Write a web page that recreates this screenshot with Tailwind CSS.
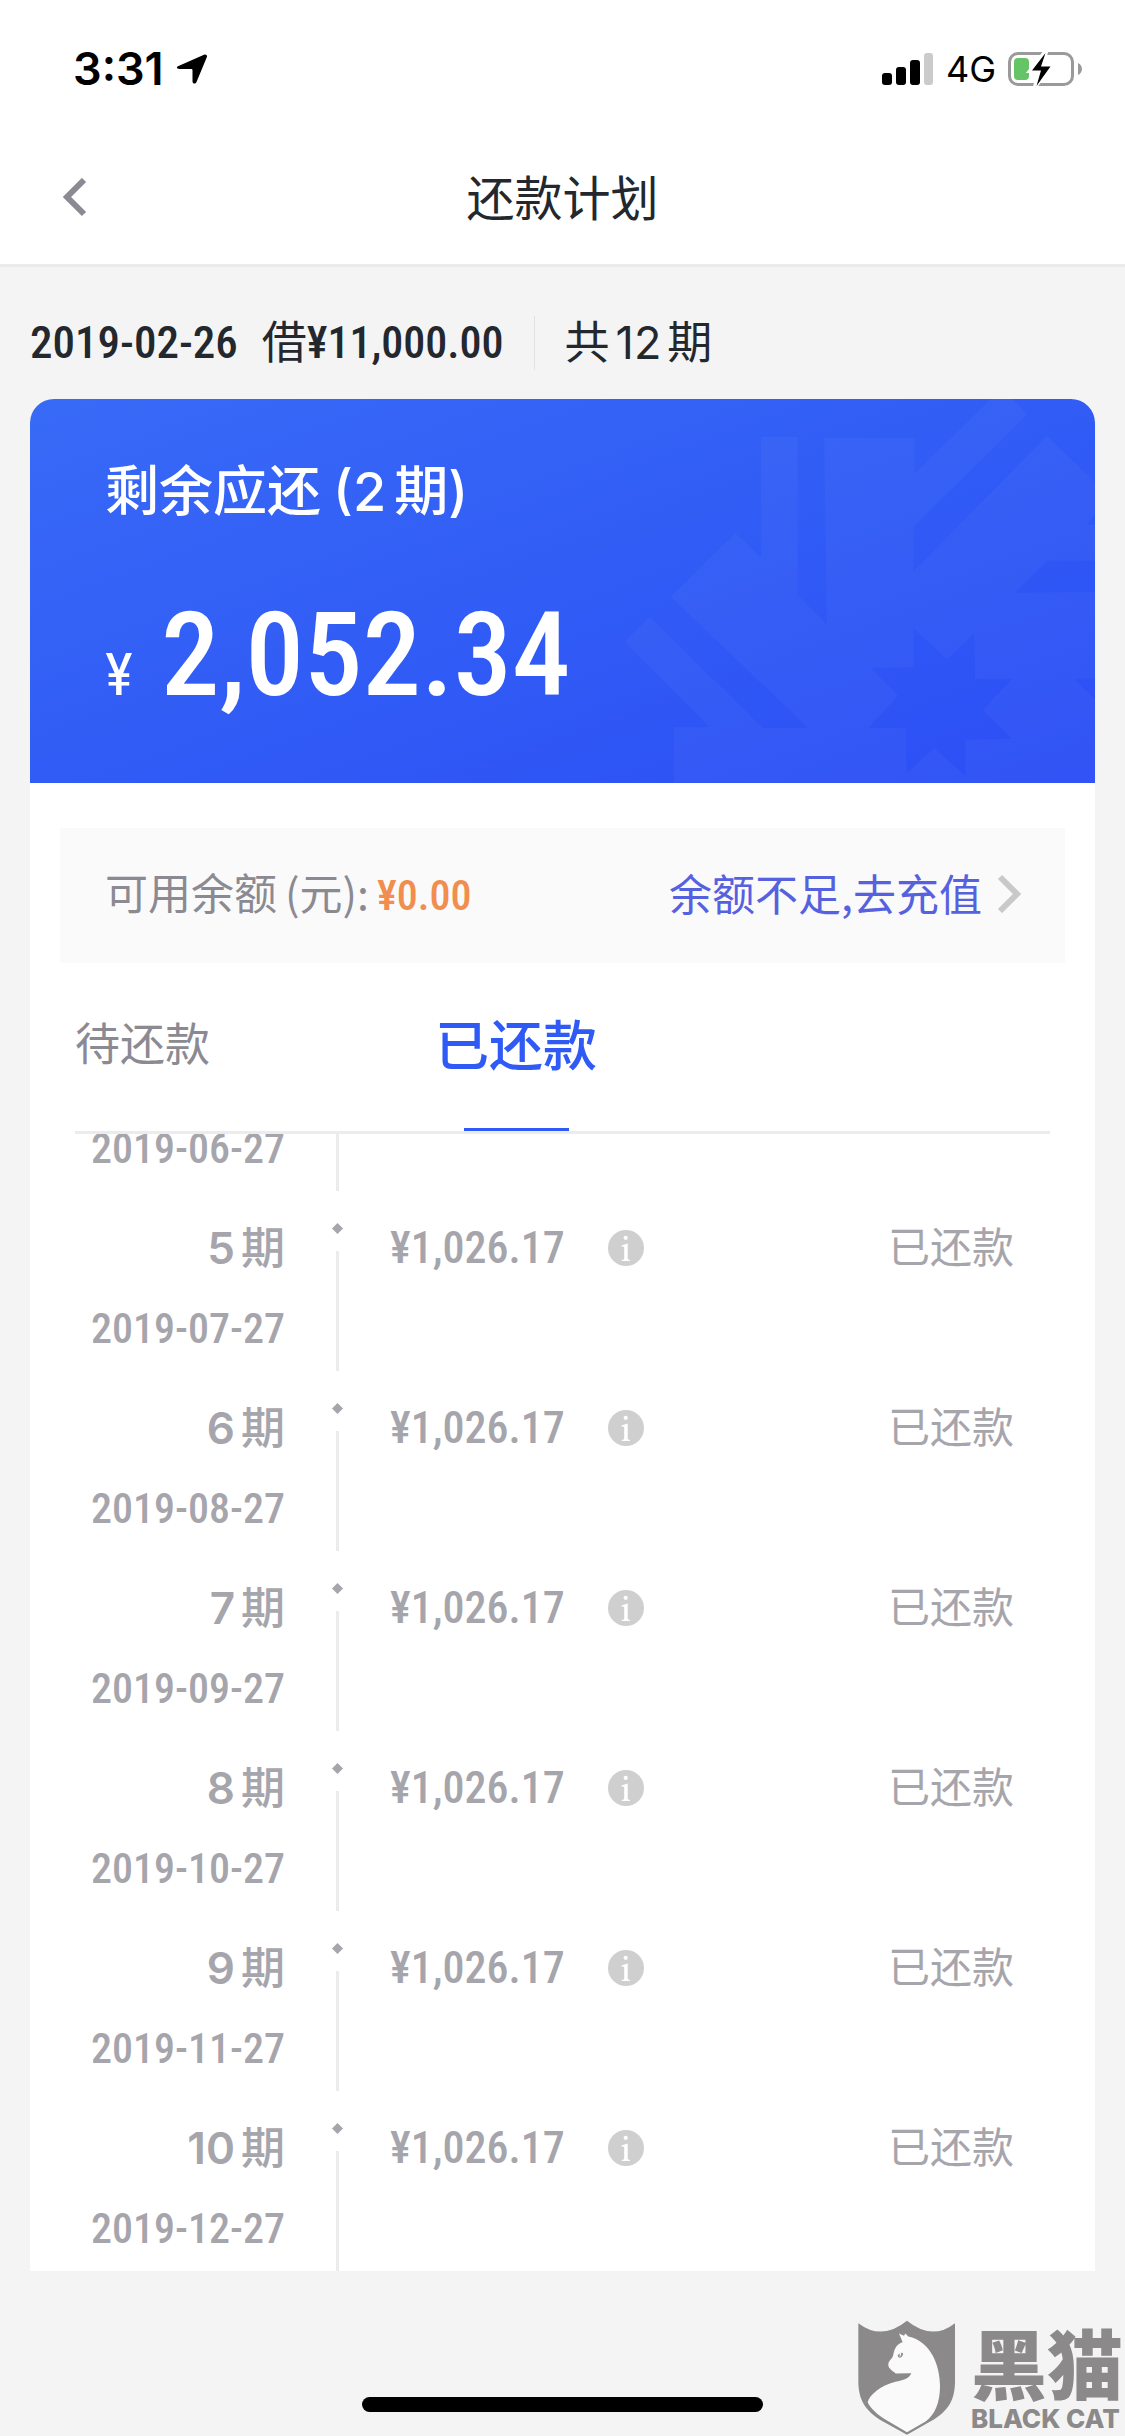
<!DOCTYPE html>
<html lang="zh-CN">
<head>
<meta charset="utf-8">
<meta name="viewport" content="width=device-width, initial-scale=1">
<title>还款计划</title>
<script src="https://cdn.jsdelivr.net/npm/@tailwindcss/browser@4"></script>
</head>
<body class="bg-[#f4f4f4] text-[#23272e] font-['Inter','Noto_Sans_CJK_SC',sans-serif]">
<div class="flex min-h-screen flex-col">

  <header class="border-b-3 border-[#ebebeb] bg-white">
    <!-- Status bar -->
    <div class="flex h-[138px] items-center justify-between pr-[42px] pl-[73px] text-black">
      <div class="flex items-center gap-3">
        <span class="text-[45px] leading-[54px] font-semibold">3:31</span>
        <svg class="h-[30px] w-[32px]" viewBox="0 0 32 30" aria-hidden="true"><path d="M2.500 12 28 .7c2-.8 3.600.6 2.800 2.600L20.500 28c-.9 2.300-4 2-4-.8V16.500c0-1-.4-1.400-1.400-1.400H3.500c-3 0-3.500-2.200-1-3.100z"/></svg>
      </div>
      <div class="flex items-center">
        <svg class="h-[32px] w-[52px]" viewBox="0 0 52 32" aria-hidden="true">
          <rect x="0" y="20" width="10" height="12" rx="3"/><rect x="14" y="14" width="10" height="18" rx="3"/><rect x="28" y="7" width="10" height="25" rx="3"/><rect x="42" y="0" width="9" height="32" rx="3" fill="#cbcbcb"/>
        </svg>
        <span class="ml-3 text-[36px] leading-[42px]">4G</span>
        <svg class="ml-3 h-[36px] w-[75px]" viewBox="0 0 75 36" aria-hidden="true">
          <rect x="1.500" y="2.500" width="63" height="31" rx="8.500" fill="none" stroke="#9a9a9a" stroke-width="3"/>
          <path d="M70 12v12c2.500-1 4-3.500 4-6s-1.500-5-4-6z" fill="#9a9a9a"/>
          <rect x="6" y="7" width="15" height="22" rx="4" fill="#65c466"/>
          <path d="M37 1 22 20h9l-4 16 16-21H34l4-14z" fill="#fff" stroke="#fff" stroke-width="4"/>
          <path d="M37.500 2 24 19.500h9L28.500 35 42.500 15.500H33z"/>
        </svg>
      </div>
    </div>
    <!-- Navigation -->
    <nav class="grid h-[126px] grid-cols-[1fr_auto_1fr] items-center px-[60px] pb-1">
      <button type="button" aria-label="返回" class="h-[42px] w-[30px]">
        <svg class="h-[42px] w-[30px]" viewBox="0 0 30 42" fill="none" stroke="#8b8a92" stroke-width="6"><path d="M24 2 7 19l17 17"/></svg>
      </button>
      <h1 class="text-[48px] leading-[60px]">还款计划</h1>
    </nav>
  </header>

  <main class="px-[30px]">
    <div class="flex h-[132px] items-center pt-5 text-[45px] leading-[54px]">
      <time class="font-['Roboto_Condensed','Noto_Sans_CJK_SC',sans-serif] font-medium">2019-02-26</time>
      <span class="ml-6">借</span>
      <span class="font-['Roboto_Condensed','Noto_Sans_CJK_SC',sans-serif] text-[44px] font-medium">¥11,000.00</span>
      <span class="mx-[30px] h-[54px] w-px bg-[#e2e2e2]"></span>
      <span>共<span class="mx-[6px]">12</span>期</span>
    </div>

    <section class="rounded-t-3xl bg-white">
      <!-- Remaining amount -->
      <div class="relative h-[384px] overflow-hidden rounded-t-3xl bg-linear-[160deg] from-[#386af7] via-[#315cf5] to-[#2c4ef5] px-[75px] text-white">
        <svg class="absolute top-0 right-0 h-full w-[535px]" viewBox="0 27 1485 1152" preserveAspectRatio="none" fill="#fff" fill-opacity=".03" fill-rule="evenodd" aria-hidden="true">
          <path d="M558 140H660V616L740 703 733 143H985V250L1196 27H1256L1297 72 982 410V543L1352 137 1485 277V373L1462 404H1485V512H1352L1263 608 1485 606V866H1427L1485 927V1179H316V1011L415 1010 178 756 249 680 563 1014H689L307 620 487 428 558 502ZM982 716V832L863 834 938 917 856 1014H960L962 1150 1039 1073 1125 1158V1049L1255 1046 1173 960 1255 866H1152L1150 730 1074 808Z"/>
        </svg>
        <div class="relative pt-[60px]">
          <h2 class="text-[54px] leading-[66px] font-medium">剩余应还<span class="ml-3">(2</span><span class="ml-2">期)</span></h2>
          <p class="mt-[60px] flex items-baseline font-['Roboto_Condensed','Noto_Sans_CJK_SC',sans-serif] leading-[141px]">
            <span class="w-[56px] text-[60px]">¥</span>
            <span class="text-[117px] font-medium">2,052.34</span>
          </p>
        </div>
      </div>

      <!-- Available balance -->
      <div class="mx-[30px] mt-[45px] flex h-[135px] items-center justify-between bg-[#fafafa] pr-[42px] pb-1 pl-[45px] text-[43px] leading-[54px]">
        <p class="font-['Noto_Sans_CJK_SC',sans-serif] text-[#8b8a92]">可用余额<span class="ml-2">(元):</span><span class="ml-2 font-['Roboto_Condensed',sans-serif] text-[42px] font-medium text-[#f18d4e]">¥0.00</span></p>
        <a href="#recharge" class="flex items-center pb-1 font-['Noto_Sans_CJK_SC',sans-serif] text-[#5661e0]">余额不足,去充值
          <svg class="ml-[15px] h-[42px] w-[26px]" viewBox="0 0 26 42" fill="none" stroke="#c9c9c9" stroke-width="6"><path d="M3 6l17 17L3 40"/></svg>
        </a>
      </div>

      <!-- Tabs -->
      <div role="tablist" class="mx-[45px] flex h-[171px] border-b-3 border-[#ececec]">
        <button type="button" role="tab" aria-selected="false" class="h-full pb-1 text-[45px] leading-[66px] text-[#8b8a92]">待还款</button>
        <button type="button" role="tab" aria-selected="true" class="ml-[225px] flex h-full flex-col items-center justify-between pt-[45px] text-[54px] leading-[78px] font-medium text-[#305af5]">已还款<span class="h-[3px] w-[105px] bg-[#305af5]"></span></button>
      </div>

      <!-- Paid instalments -->
      <ol id="rows" class="mx-[45px] flex h-[1137px] flex-col justify-end overflow-hidden text-[#a6a5ac]"></ol>
    </section>
  </main>

  <footer class="relative flex flex-1 items-end justify-center pb-6">
    <div class="h-[15px] w-[401px] rounded-full bg-black"></div>
    <div class="absolute right-[2px] bottom-0 flex h-[116px] text-[#8b898a]">
      <svg class="h-[116px] w-[98px]" viewBox="18 33 294 345" aria-label="黑猫">
        <path fill="#8b898a" d="M19 41Q90 95 165 34 240 95 309 41V215C309 280 282 310 228 340L165 376 100 340C48 310 19 280 19 215Z"/>
        <path fill="#fafafa" d="M141 72 156 79 160 72 169 81C235 95 264 165 264 230 264 280 248 315 222 335L165 368 105 333C75 315 55 295 47 278 52 258 85 228 130 217 155 211 170 208 178 191L131 192C120 183 107 176 109 163 112 150 122 148 124 135 128 112 138 102 152 98Z"/>
        <path fill="#8b898a" d="M137 137 144 131 142 142Q147 142 148 129L153 131Q153 142 143 145Q137 144 137 137Z"/>
      </svg>
      <div class="ml-[15px] flex flex-col">
        <span class="font-['Noto_Sans_CJK_SC',sans-serif] text-[76px] leading-[82px] font-black">黑猫</span>
        <span class="text-[26px] leading-[34px] font-extrabold">BLACK CAT</span>
      </div>
    </div>
  </footer>
</div>

<template id="row">
  <li class="grid h-[180px] shrink-0 grid-cols-[210px_105px_1fr_auto]">
    <div class="pt-[27px] text-right">
      <p class="text-[44px] leading-[60px] font-semibold"><span class="term mr-[6px]"></span><span class="font-medium">期</span></p>
      <time class="mt-6 block font-['Roboto_Condensed',sans-serif] text-[42px] leading-[54px] font-medium"></time>
    </div>
    <div class="flex flex-col items-center pt-8">
      <svg class="h-[11px] w-[11px]" viewBox="0 0 11 11" fill="#a6a5ac"><path d="M5.500 0 11 5.500 5.500 11 0 5.500z"/></svg>
      <div class="mt-[17px] w-[3px] flex-1 bg-[#ececec]"></div>
    </div>
    <div class="flex h-[114px] items-center">
      <span class="font-['Roboto_Condensed',sans-serif] text-[44px] leading-[54px] font-medium">¥1,026.17</span>
      <button type="button" aria-label="详情" class="ml-[43px] h-9 w-9">
        <svg class="h-9 w-9" viewBox="0 0 36 36"><circle cx="18" cy="18" r="18" fill="#cfcfcf"/><g fill="#fff"><circle cx="17.700" cy="7.800" r="2.100"/><path d="M13.500 15.500 19.700 13.500V28.500Q19.700 29.700 22 29.900V31H13.700V29.900Q16.200 29.700 16.200 28.500V17.500Q16.200 16.200 13.500 16.600Z"/></g></svg>
      </button>
    </div>
    <p class="flex h-[114px] items-center pr-9 text-[42px] leading-[54px]">已还款</p>
  </li>
</template>
<script>
  const list = document.getElementById('rows');
  const template = document.getElementById('row');
  [[4, '2019-06-27'], [5, '2019-07-27'], [6, '2019-08-27'], [7, '2019-09-27'], [8, '2019-10-27'], [9, '2019-11-27'], [10, '2019-12-27']].forEach(([term, date]) => {
    const row = template.content.cloneNode(true);
    row.querySelector('.term').textContent = term;
    row.querySelector('time').textContent = date;
    list.append(row);
  });
</script>
</body>
</html>
